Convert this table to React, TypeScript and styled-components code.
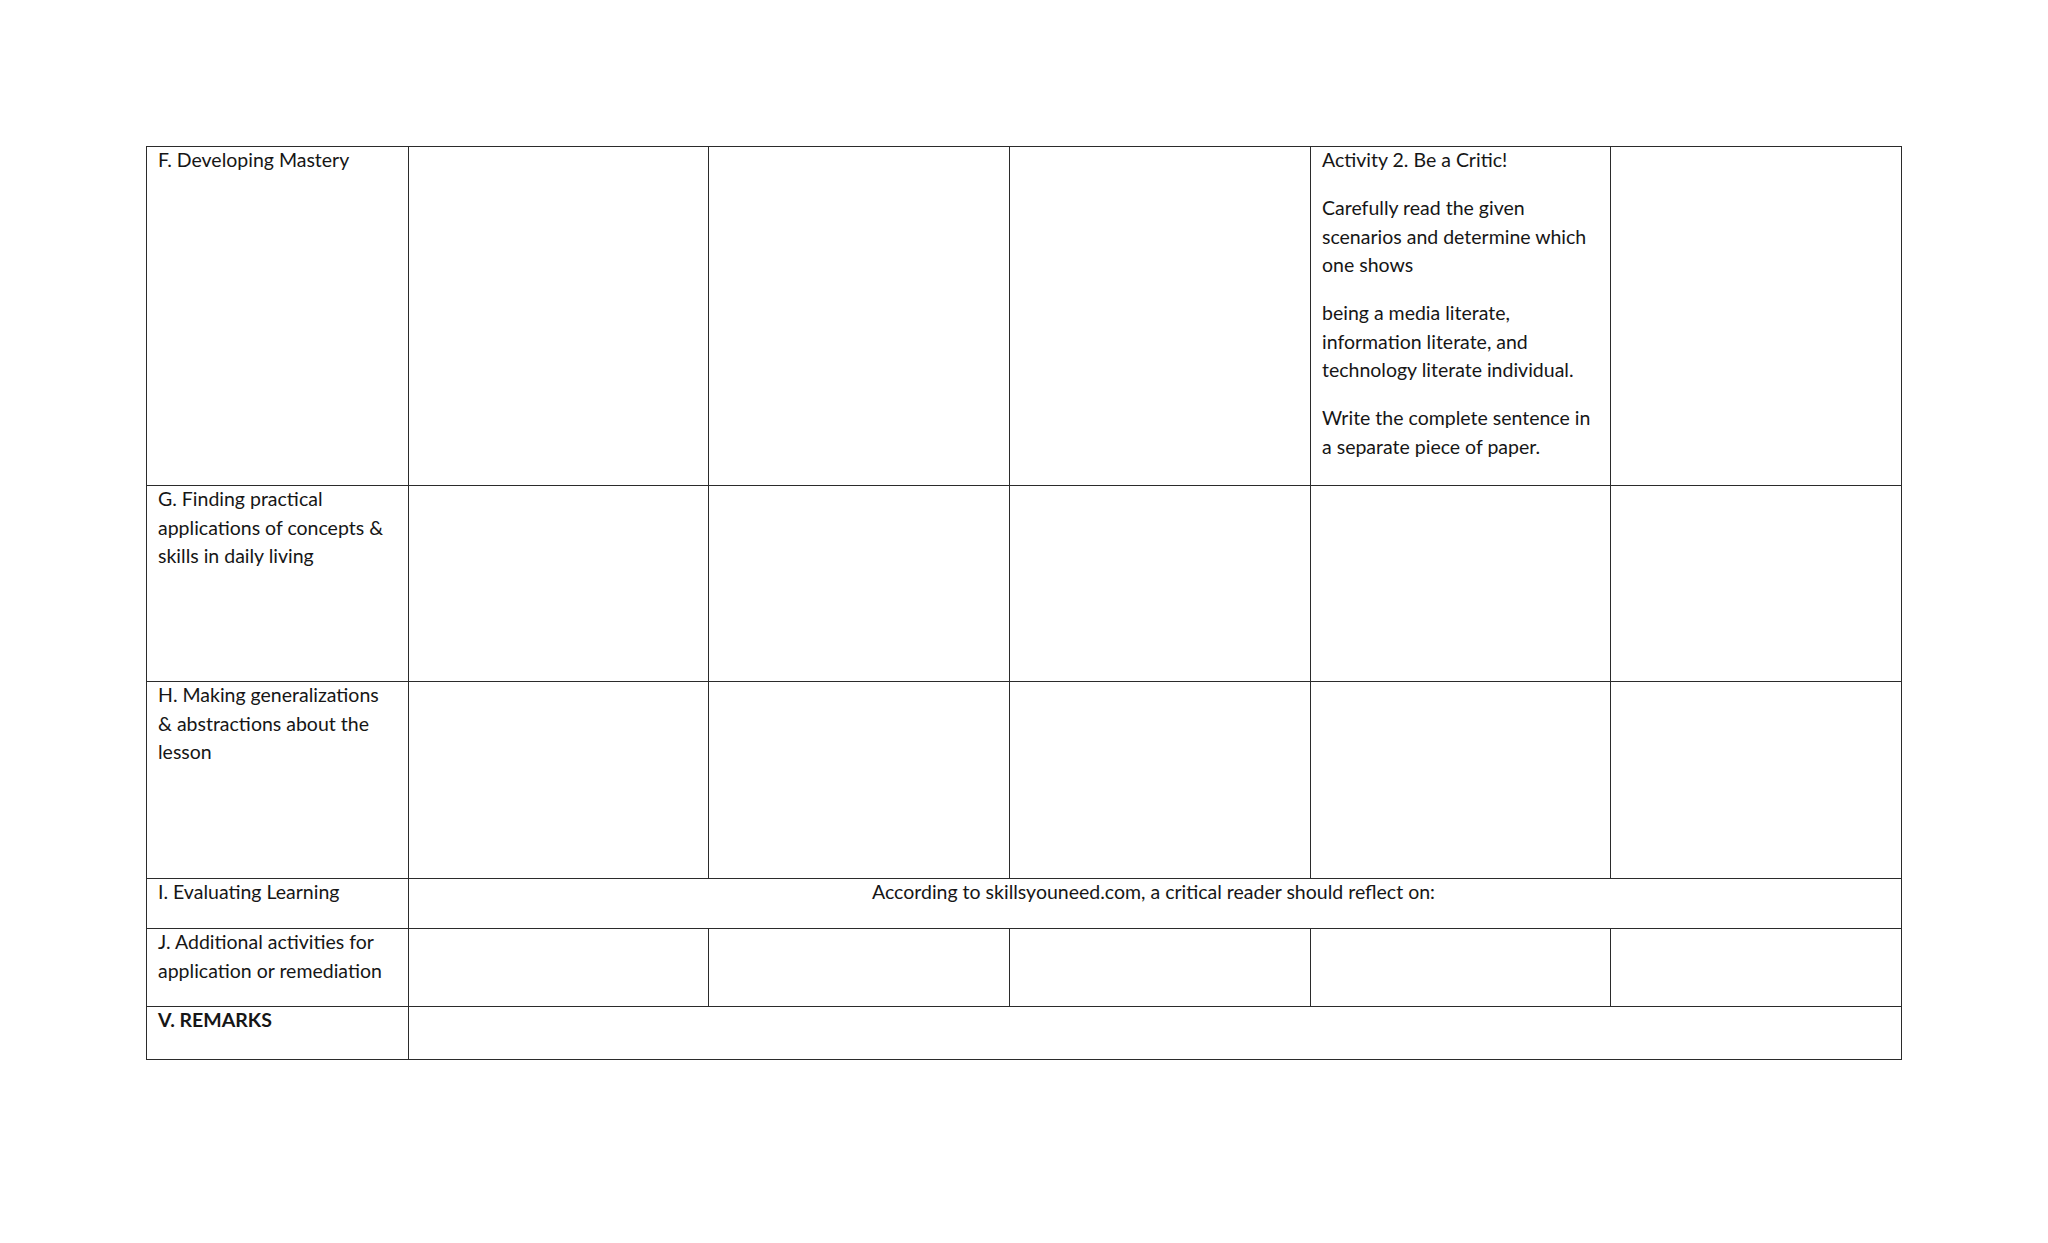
import React from "react";
import styled, { createGlobalStyle } from "styled-components";

const Global = createGlobalStyle`
  html, body { margin: 0; padding: 0; background: #ffffff; }
  body { font-family: Lato, "Open Sans", "Liberation Sans", sans-serif; color: #161616; }
`;

const Page = styled.div`
  width: 2048px;
  min-height: 1243px;
  padding: 146px 0 0 146px;
  box-sizing: border-box;
`;

const Table = styled.table`
  border-collapse: collapse;
  table-layout: fixed;
  width: 1755px;
  border: 1px solid #2b2b2b;
`;

const Row = styled.tr<{ $h: number }>`
  height: ${(p) => p.$h}px;
`;

const Cell = styled.td<{ $center?: boolean }>`
  border: 1px solid #2b2b2b;
  vertical-align: top;
  padding: 0 14px 0 11px;
  font-size: 19.5px;
  line-height: 28.5px;
  text-align: ${(p) => (p.$center ? "center" : "left")};
`;

const Para = styled.p`
  margin: -1px 0 20.5px 0;
  &:last-child { margin-bottom: 0; }
`;

const Label = styled.div`
  margin-top: -1px;
`;

const Bold = styled.span`
  font-weight: 700;
`;

const cols = [262, 300, 301, 301, 300, 291];

const Empties = ({ n }: { n: number }) => (
  <>
    {Array.from({ length: n }).map((_, i) => (
      <Cell key={i} />
    ))}
  </>
);

export default function App() {
  return (
    <Page>
      <Global />
      <Table>
        <colgroup>
          {cols.map((w, i) => (
            <col key={i} style={{ width: w }} />
          ))}
        </colgroup>
        <tbody>
          <Row $h={339}>
            <Cell><Label>F. Developing Mastery</Label></Cell>
            <Empties n={3} />
            <Cell>
              <Para>Activity 2. Be a Critic!</Para>
              <Para>Carefully read the given scenarios and determine which one shows</Para>
              <Para>being a media literate, information literate, and technology literate individual.</Para>
              <Para>Write the complete sentence in a separate piece of paper.</Para>
            </Cell>
            <Cell />
          </Row>
          <Row $h={196}>
            <Cell><Label>G. Finding practical applications of concepts &amp; skills in daily living</Label></Cell>
            <Empties n={5} />
          </Row>
          <Row $h={197}>
            <Cell><Label>H. Making generalizations &amp; abstractions about the lesson</Label></Cell>
            <Empties n={5} />
          </Row>
          <Row $h={50}>
            <Cell><Label>I. Evaluating Learning</Label></Cell>
            <Cell $center colSpan={5}>
              <Label>According to skillsyouneed.com, a critical reader should reflect on:</Label>
            </Cell>
          </Row>
          <Row $h={78}>
            <Cell><Label>J. Additional activities for application or remediation</Label></Cell>
            <Empties n={5} />
          </Row>
          <Row $h={53}>
            <Cell>
              <Label><Bold>V. REMARKS</Bold></Label>
            </Cell>
            <Cell colSpan={5} />
          </Row>
        </tbody>
      </Table>
    </Page>
  );
}
